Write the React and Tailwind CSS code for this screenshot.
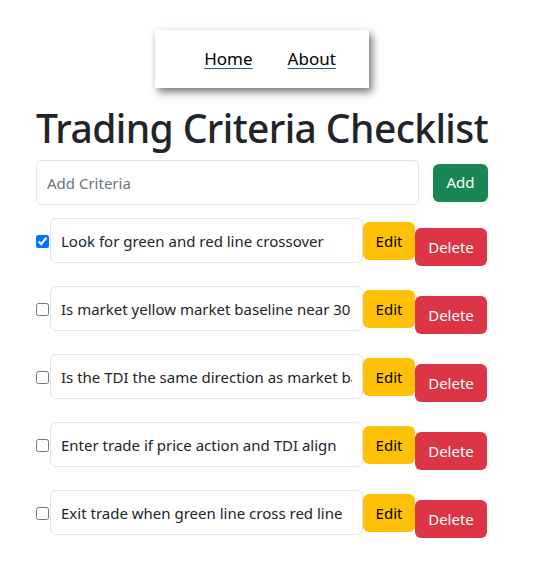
import React, { useState } from "react";

const initialItems = [
  { id: 1, text: "Look for green and red line crossover", done: true },
  { id: 2, text: "Is market yellow market baseline near 30 or 70", done: false },
  { id: 3, text: "Is the TDI the same direction as market baseline", done: false },
  { id: 4, text: "Enter trade if price action and TDI align", done: false },
  { id: 5, text: "Exit trade when green line cross red line", done: false },
];

const CriteriaRow = ({ item, onToggle }) => (
  <div className="flex items-start">
    <input
      type="checkbox"
      checked={item.done}
      onChange={() => onToggle(item.id)}
      className="m-0 mt-[17px] w-[13px] h-[13px] shrink-0"
    />
    <input
      type="text"
      readOnly
      value={item.text}
      className="ml-[1px] w-[313px] h-[45px] px-[10px] border border-[#e3e6e9] rounded-md text-[15px] text-[#212529] bg-white outline-none"
    />
    <button className="mt-[4px] w-[52px] h-[38px] rounded-md bg-[#ffc107] text-black text-[15px]">
      Edit
    </button>
    <button className="mt-[10px] w-[72px] h-[38px] rounded-md bg-[#dc3545] text-white text-[15px]">
      Delete
    </button>
  </div>
);

export default function App() {
  const [items, setItems] = useState(initialItems);
  const [criteria, setCriteria] = useState("");

  const toggle = (id) => {
    setItems(prev => prev.map(i => (i.id === id ? { ...i, done: !i.done } : i)));
  };

  return (
    <div className="min-h-[569px] bg-white font-['Noto_Sans',sans-serif] text-[#212529]">
      <div className="w-[452px] ml-[36px] pt-[30px]">
        {/* nav */}
        <nav className="mx-auto w-[214px] h-[58px] flex items-center justify-center gap-[35px] pl-[16px] bg-white shadow-[3px_4px_8px_rgba(0,0,0,0.55)]">
          <a href="#" className="text-[17px] text-black underline decoration-[#1e55c8] underline-offset-[3px]">Home</a>
          <a href="#" className="text-[17px] text-black underline decoration-[#1e55c8] underline-offset-[3px]">About</a>
        </nav>

        <h1 className="mt-[16px] text-[39px] leading-[48px] font-medium tracking-[-0.6px] whitespace-nowrap">
          Trading Criteria Checklist
        </h1>

        <form className="flex items-center mt-[8px]" onSubmit={(e) => e.preventDefault()}>
          <input
            type="text"
            value={criteria}
            onChange={(e) => setCriteria(e.target.value)}
            placeholder="Add Criteria"
            className="w-[383px] h-[45px] px-[10px] border border-[#e3e6e9] rounded-md text-[15px] placeholder:text-[#6c757d] outline-none"
          />
          <button type="submit" className="ml-auto w-[55px] h-[38px] rounded-md bg-[#198754] text-white text-[15px]">
            Add
          </button>
        </form>

        <div className="flex flex-col gap-[20px] mt-[13px]">
          {items.map(item => (
            <CriteriaRow key={item.id} item={item} onToggle={toggle} />
          ))}
        </div>
      </div>
    </div>
  );
}
